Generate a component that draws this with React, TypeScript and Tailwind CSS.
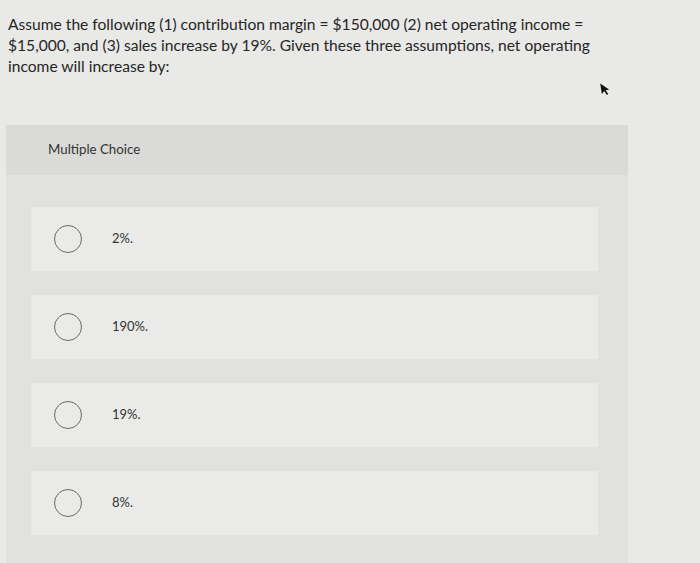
const options = ['2%.', '190%.', '19%.', '8%.']

function Cursor() {
  return (
    <svg width="12" height="14" viewBox="0 0 12 14" className="absolute left-[599px] top-[82px]">
      <path d="M2 1 L10 8 L6.5 8.3 L8.5 12.5 L7 13.2 L5 9 L2.2 11.5 Z" fill="#111" transform="rotate(-8 6 7)" />
    </svg>
  )
}

export default function App() {
  return (
    <div
      className="relative h-[563px] w-[700px] overflow-hidden bg-[#e9e9e7] text-[#262626]"
      style={{ fontFamily: 'Lato, "Open Sans", sans-serif' }}
    >
      <p className="px-2 pt-[14px] text-[15.6px] leading-[21px] whitespace-nowrap">
        Assume the following (1) contribution margin = $150,000 (2) net operating income =
        <br />
        $15,000, and (3) sales increase by 19%. Given these three assumptions, net operating
        <br />
        income will increase by:
      </p>
      <Cursor />
      <div className="ml-[6px] mt-[48px] h-[460px] w-[622px] bg-[#e1e1df]">
        <div className="flex h-[50px] items-center bg-[#dadad8] pl-[42px] text-[13.3px] text-[#333]">
          Multiple Choice
        </div>
        <div className="flex flex-col gap-[24px] pl-[25px] pt-[32px]">
          {options.map((o) => (
            <div key={o} className="flex h-[64px] w-[567px] items-center bg-[#eaeae8] pl-[23px]">
              <span className="h-[28px] w-[28px] rounded-full border-[1.5px] border-[#6a6a6a]" />
              <span className="ml-[30px] text-[13px] text-[#333]">{o}</span>
            </div>
          ))}
        </div>
      </div>
    </div>
  )
}
